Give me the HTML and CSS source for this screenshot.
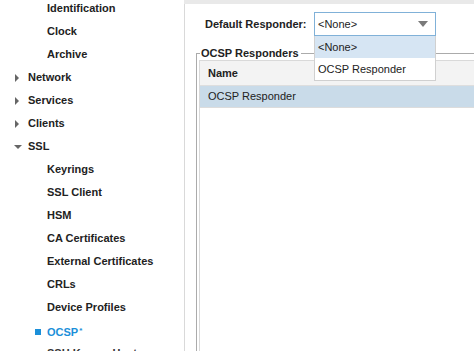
FILE: index.html
```html
<!DOCTYPE html>
<html lang="en">
<head>
  <meta charset="UTF-8" />
  <title>SSL - OCSP</title>
  <link rel="stylesheet" href="styles.css">
</head>
<body>
<div class="app">
  <nav class="sidebar">
    <ul class="tree">
      <li class="leaf">Identification</li>
      <li class="leaf">Clock</li>
      <li class="leaf">Archive</li>
      <li class="node">Network</li>
      <li class="node">Services</li>
      <li class="node">Clients</li>
      <li class="node open">SSL</li>
      <li class="leaf">Keyrings</li>
      <li class="leaf">SSL Client</li>
      <li class="leaf">HSM</li>
      <li class="leaf">CA Certificates</li>
      <li class="leaf">External Certificates</li>
      <li class="leaf">CRLs</li>
      <li class="leaf">Device Profiles</li>
      <li class="leaf active">OCSP<span class="dirty">*</span></li>
      <li class="leaf">SSH Known Hosts</li>
    </ul>
  </nav>

  <main class="main">
    <div class="panel">
      <div class="field-row">
        <label class="field-label">Default Responder:</label>
        <div class="select">
          <div class="select-box">
            <span>&lt;None&gt;</span>
            <svg class="caret" width="10" height="6" viewBox="0 0 10 6"><path d="M0 0 L10 0 L5 6 Z" fill="#7a7a7a"/></svg>
          </div>
          <ul class="select-list">
            <li class="hl">&lt;None&gt;</li>
            <li>OCSP Responder</li>
          </ul>
        </div>
      </div>

      <fieldset class="group">
        <legend>OCSP Responders</legend>
        <div class="table">
          <div class="thead">Name</div>
          <div class="row selected">OCSP Responder</div>
        </div>
      </fieldset>
    </div>
  </main>
</div>
</body>
</html>
```

FILE: styles.css
```css
html, body {
  margin: 0;
  padding: 0;
  overflow: hidden;
  height: 100%;
  font-family: "Liberation Sans", Arial, sans-serif;
  font-size: 11px;
  color: #222;
  background: #fff;
}

.app {
  display: flex;
  height: 100%;
}

/* left navigation tree */
.sidebar {
  width: 184px;
  flex: none;
  background: #fff;
  overflow: hidden;
}

.tree {
  list-style: none;
  margin: -3px 0 0 0;
  padding: 0;
}

.tree li {
  height: 23px;
  line-height: 23px;
  font-weight: bold;
  white-space: nowrap;
}

.tree .leaf {
  padding-left: 47px;
}

.tree .node {
  padding-left: 15px;
}

.tree .node::before {
  content: "";
  display: inline-block;
  width: 0;
  height: 0;
  border-left: 4px solid #666;
  border-top: 4px solid transparent;
  border-bottom: 4px solid transparent;
  margin-right: 9px;
  vertical-align: -1px;
}

.tree .node.open::before {
  border-left: 4px solid transparent;
  border-right: 4px solid transparent;
  border-top: 4px solid #666;
  border-bottom: 0;
  margin-left: -1px;
  margin-right: 6px;
  vertical-align: 1px;
}

.tree .leaf.active {
  padding-left: 35px;
  color: #1b8fd9;
}

.tree .leaf.active::before {
  content: "";
  display: inline-block;
  width: 6px;
  height: 6px;
  background: #1b8fd9;
  margin-right: 6px;
  vertical-align: 1px;
}

.tree .dirty {
  font-size: 8px;
  vertical-align: 3px;
  margin-left: 1px;
}

.tree li:last-child {
  color: #333;
}

/* right content */
.main {
  flex: 1;
  background: #e9e9e9;
  padding-top: 4px;
  min-width: 0;
}

.panel {
  height: 100%;
  background: #fff;
  border-left: 1px solid #d9d9d9;
  padding: 8px 0 0 11px;
  box-sizing: border-box;
}

.field-row {
  display: flex;
  align-items: center;
  padding-left: 9px;
  height: 24px;
  position: relative;
  z-index: 2;
}

.field-label {
  font-weight: bold;
  width: 109px;
  flex: none;
}

.select {
  position: relative;
  width: 122px;
}

.select-box {
  height: 24px;
  box-sizing: border-box;
  border: 1px solid #80b1d8;
  background: #fff;
  display: flex;
  align-items: center;
  justify-content: space-between;
  padding: 0 7px 0 3px;
}

.select-list {
  position: absolute;
  top: 24px;
  left: 0;
  right: 0;
  margin: 0;
  padding: 0;
  list-style: none;
  background: #fff;
  border: 1px solid #d0d0d0;
  border-top: 0;
}

.select-list li {
  height: 22px;
  line-height: 22px;
  padding-left: 3px;
}

.select-list .hl {
  background: #d6e5f3;
}

.group {
  margin: 11px 0 0 0;
  padding: 0 0 0 2px;
  border: 1px solid #ababab;
  border-right: 0;
  border-bottom: 0;
  height: 400px;
}

.group legend {
  font-weight: bold;
  padding: 0 2px 0 1px;
  margin-left: 1px;
  line-height: 13px;
}

.table {
  border: 1px solid #d9d9d9;
  border-right: 0;
  height: 100%;
}

.thead {
  height: 24px;
  line-height: 24px;
  padding-left: 8px;
  font-weight: bold;
  background: #f3f3f3;
  border-bottom: 1px solid #dedede;
}

.row {
  height: 21px;
  line-height: 21px;
  padding-left: 8px;
  border-bottom: 1px solid #dcdcdc;
}

.row.selected {
  background: #c9dbe9;
}
```
